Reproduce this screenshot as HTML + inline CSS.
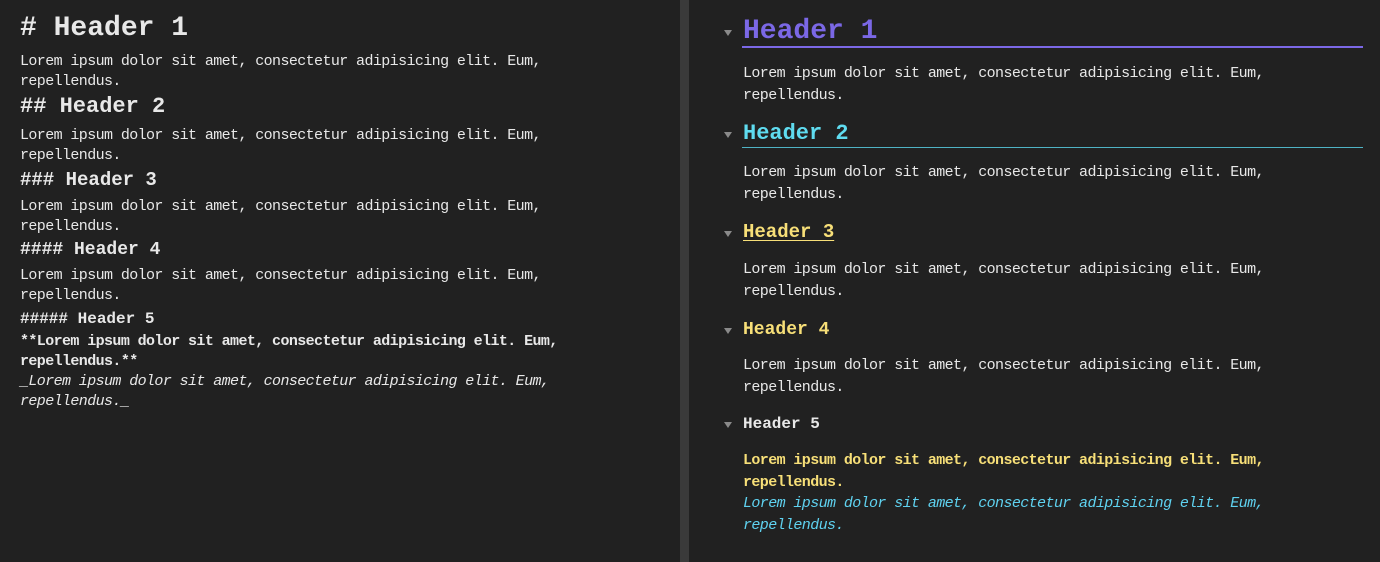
<!DOCTYPE html>
<html><head><style>
html,body{margin:0;padding:0;background:#212121;width:1380px;height:562px;overflow:hidden;font-family:"Liberation Mono",monospace;color:#e8e8e8}
.t{position:absolute;line-height:40px;white-space:pre;font-size:15px;letter-spacing:-0.6px}
.b{font-weight:bold}
.h{letter-spacing:0}
.tri{position:absolute;left:724px;width:0;height:0;border-left:4px solid transparent;border-right:4px solid transparent;border-top:6px solid #8a8a8a}
</style></head><body>
<div style="position:absolute;left:680px;top:0;width:9px;height:562px;background:#3a3a3a"></div>

<div class="t b h" style="left:20px;top:9px;font-size:28px"># Header 1</div>
<div class="t" style="left:20px;top:42px">Lorem ipsum dolor sit amet, consectetur adipisicing elit. Eum,</div>
<div class="t" style="left:20px;top:62px">repellendus.</div>
<div class="t b h" style="left:20px;top:87px;font-size:22px">## Header 2</div>
<div class="t" style="left:20px;top:116px">Lorem ipsum dolor sit amet, consectetur adipisicing elit. Eum,</div>
<div class="t" style="left:20px;top:136px">repellendus.</div>
<div class="t b h" style="left:20px;top:160px;font-size:19px">### Header 3</div>
<div class="t" style="left:20px;top:187px">Lorem ipsum dolor sit amet, consectetur adipisicing elit. Eum,</div>
<div class="t" style="left:20px;top:207px">repellendus.</div>
<div class="t b h" style="left:20px;top:230px;font-size:18px">#### Header 4</div>
<div class="t" style="left:20px;top:256px">Lorem ipsum dolor sit amet, consectetur adipisicing elit. Eum,</div>
<div class="t" style="left:20px;top:276px">repellendus.</div>
<div class="t b h" style="left:20px;top:299px;font-size:16px">##### Header 5</div>
<div class="t b" style="left:20px;top:322px">**Lorem ipsum dolor sit amet, consectetur adipisicing elit. Eum,</div>
<div class="t b" style="left:20px;top:342px">repellendus.**</div>
<div class="t" style="left:20px;top:362px;font-style:italic">_Lorem ipsum dolor sit amet, consectetur adipisicing elit. Eum,</div>
<div class="t" style="left:20px;top:382px;font-style:italic">repellendus._</div>

<div class="tri" style="top:30px"></div>
<div class="t b h" style="left:743px;top:12px;font-size:28px;color:#7b68e6">Header 1</div>
<div style="position:absolute;left:742px;top:46px;width:621px;height:2px;background:#7b68e6"></div>
<div class="t" style="left:743px;top:54px">Lorem ipsum dolor sit amet, consectetur adipisicing elit. Eum,</div>
<div class="t" style="left:743px;top:76px">repellendus.</div>

<div class="tri" style="top:132px"></div>
<div class="t b h" style="left:743px;top:114px;font-size:22px;color:#5fdcf0">Header 2</div>
<div style="position:absolute;left:742px;top:147px;width:621px;height:1px;background:#4fb3c4"></div>
<div class="t" style="left:743px;top:153px">Lorem ipsum dolor sit amet, consectetur adipisicing elit. Eum,</div>
<div class="t" style="left:743px;top:175px">repellendus.</div>

<div class="tri" style="top:231px"></div>
<div class="t b h" style="left:743px;top:212px;font-size:19px;color:#f7df78;text-decoration:underline;text-underline-offset:3px">Header 3</div>
<div class="t" style="left:743px;top:250px">Lorem ipsum dolor sit amet, consectetur adipisicing elit. Eum,</div>
<div class="t" style="left:743px;top:272px">repellendus.</div>

<div class="tri" style="top:328px"></div>
<div class="t b h" style="left:743px;top:310px;font-size:18px;color:#f7df78">Header 4</div>
<div class="t" style="left:743px;top:346px">Lorem ipsum dolor sit amet, consectetur adipisicing elit. Eum,</div>
<div class="t" style="left:743px;top:368px">repellendus.</div>

<div class="tri" style="top:422px"></div>
<div class="t b h" style="left:743px;top:404px;font-size:16px">Header 5</div>
<div class="t b" style="left:743px;top:441px;color:#f7df78">Lorem ipsum dolor sit amet, consectetur adipisicing elit. Eum,</div>
<div class="t b" style="left:743px;top:463px;color:#f7df78">repellendus.</div>
<div class="t" style="left:743px;top:484px;font-style:italic;color:#5fd2f0">Lorem ipsum dolor sit amet, consectetur adipisicing elit. Eum,</div>
<div class="t" style="left:743px;top:506px;font-style:italic;color:#5fd2f0">repellendus.</div>
</body></html>
